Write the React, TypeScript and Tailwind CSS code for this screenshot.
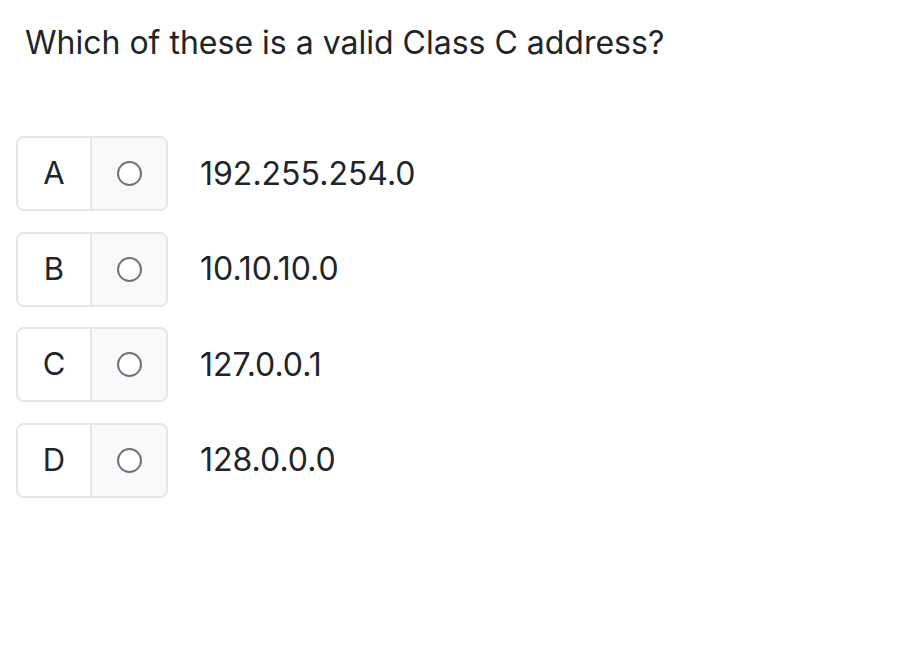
const OPTIONS = [
  { letter: "A", text: "192.255.254.0" },
  { letter: "B", text: "10.10.10.0" },
  { letter: "C", text: "127.0.0.1" },
  { letter: "D", text: "128.0.0.0" },
];

function Option({ letter, text }: { letter: string; text: string }) {
  return (
    <div className="flex items-center">
      <div className="flex h-[75px] w-[152px] shrink-0 overflow-hidden rounded-lg border-2 border-[#e3e6ea]">
        <div className="flex w-[74px] items-center justify-center border-r-2 border-[#e3e6ea] bg-white text-[31px] text-[#212529]">
          {letter}
        </div>
        <div className="flex flex-1 items-center justify-center bg-[#f8f9fa]">
          <span className="block h-[25px] w-[25px] rounded-full border-2 border-[#6f7479] bg-white" />
        </div>
      </div>
      <span className="ml-[32px] text-[32px] text-[#212529]">{text}</span>
    </div>
  );
}

export default function App() {
  return (
    <div className="min-h-screen bg-white px-4 pt-[22px]" style={{ fontFamily: "Inter, 'Noto Sans', sans-serif" }}>
      <h1 className="pl-[9px] text-[32px] leading-[42px] text-[#212529]">
        Which of these is a valid Class C address?
      </h1>
      <div className="mt-[72px] flex flex-col gap-[20.5px]">
        {OPTIONS.map((o) => (
          <Option key={o.letter} {...o} />
        ))}
      </div>
    </div>
  );
}
